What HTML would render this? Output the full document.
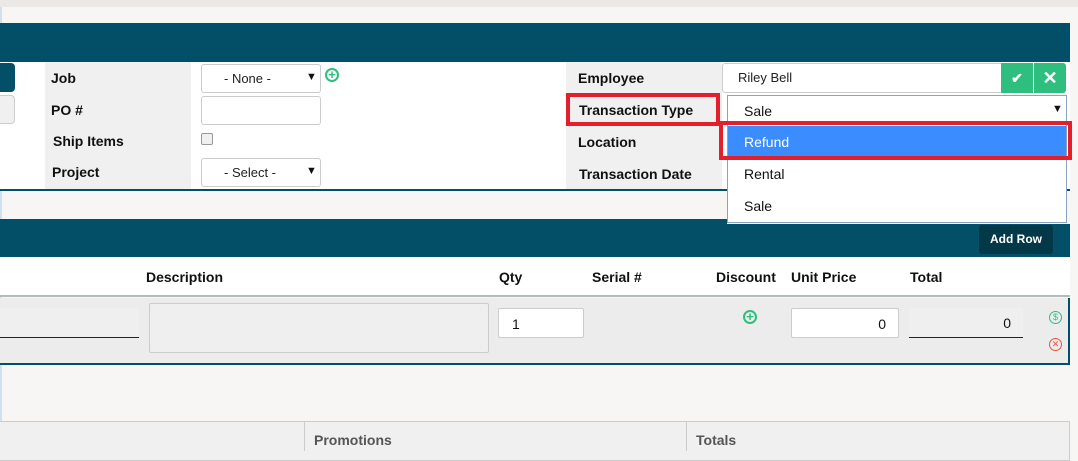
<!DOCTYPE html>
<html><head><style>
*{margin:0;padding:0;box-sizing:border-box}
body{width:1078px;height:450px;background:#f7f6f4;font-family:"Liberation Sans",Arial,sans-serif;position:relative;overflow:hidden;font-size:14px;color:#111}
.a{position:absolute}
.lbl{font-weight:bold;font-size:14px}
.inp{position:absolute;background:#fff;border:1px solid #ccc;border-radius:3px}
.sel{font-size:13px;color:#222}
</style></head><body>
<div class="a" style="left:0;top:0;width:1078px;height:7px;background:#ebe8e6"></div>
<div class="a" style="left:0;top:7px;width:2px;height:443px;background:#cfe0ee"></div>
<div class="a" style="left:0;top:23px;width:1070px;height:39px;background:#034f67"></div>
<div class="a" style="left:0;top:62px;width:1070px;height:129px;background:#fff;border-bottom:2px solid #034f67"></div>
<div class="a" style="left:0;top:63px;width:15px;height:29px;background:#034f67;border-radius:0 4px 4px 0"></div>
<div class="a" style="left:0;top:95px;width:15px;height:29px;background:#f0f0f0;border:1px solid #ccc;border-left:none;border-radius:0 4px 4px 0"></div>
<div class="a" style="left:45px;top:62px;width:146px;height:127px;background:#f0f0f0"></div>
<div class="a" style="left:566px;top:62px;width:156px;height:127px;background:#f0f0f0"></div>
<div class="a lbl" style="left:51px;top:70px">Job</div>
<div class="a lbl" style="left:51px;top:102px">PO #</div>
<div class="a lbl" style="left:53px;top:133px">Ship Items</div>
<div class="a lbl" style="left:52px;top:164px">Project</div>
<div class="inp" style="left:201px;top:64px;width:120px;height:29px"><span class="a sel" style="left:22px;top:6px">- None -</span><span class="a" style="left:104px;top:6px;font-size:11px">▼</span></div>
<div class="a" style="left:325px;top:68px;width:14px;height:14px;border:2px solid #2ebf7f;border-radius:50%;color:#2ebf7f;font-weight:bold;font-size:13px;line-height:9px;text-align:center">+</div>
<div class="inp" style="left:201px;top:96px;width:120px;height:29px"></div>
<div class="a" style="left:201px;top:133px;width:12px;height:12px;border:1px solid #999;border-radius:2px;background:#f0f0f0"></div>
<div class="inp" style="left:201px;top:158px;width:120px;height:29px"><span class="a sel" style="left:22px;top:6px">- Select -</span><span class="a" style="left:104px;top:6px;font-size:11px">▼</span></div>
<div class="a lbl" style="left:578px;top:70px">Employee</div>
<div class="a lbl" style="left:579px;top:102px">Transaction Type</div>
<div class="a lbl" style="left:578px;top:134px">Location</div>
<div class="a lbl" style="left:579px;top:166px">Transaction Date</div>
<div class="inp" style="left:722px;top:63px;width:280px;height:30px;border-radius:3px 0 0 3px"><span class="a sel" style="left:15px;top:6px">Riley Bell</span></div>
<div class="a" style="left:1001px;top:63px;width:32px;height:30px;background:#2ebf7f;color:#fff;text-align:center;line-height:30px;font-weight:bold">✔</div>
<div class="a" style="left:1034px;top:63px;width:32px;height:30px;background:#2ebf7f;color:#fff;text-align:center;line-height:30px;font-weight:bold;font-size:18px;border-radius:0 3px 3px 0">✕</div>
<div class="a" style="left:566px;top:93px;width:154px;height:33px;border:4px solid #e41f2b"></div>
<div class="a" style="left:727px;top:95px;width:340px;height:128px;background:#fff;border:1px solid #8aa3c0"></div>
<div class="a" style="left:744px;top:103px;font-size:14px">Sale</div>
<div class="a" style="left:1052px;top:103px;font-size:11px">▼</div>
<div class="a" style="left:728px;top:126px;width:338px;height:31px;background:#3a8cff"></div>
<div class="a" style="left:719px;top:121px;width:353px;height:39px;border:4px solid #e41f2b"></div>
<div class="a" style="left:744px;top:134px;font-size:14px;color:#fff">Refund</div>
<div class="a" style="left:744px;top:166px;font-size:14px">Rental</div>
<div class="a" style="left:744px;top:198px;font-size:14px">Sale</div>
<div class="a" style="left:0;top:219px;width:727px;height:38px;background:#034f67"></div>
<div class="a" style="left:727px;top:224px;width:343px;height:33px;background:#034f67"></div>
<div class="a" style="left:979px;top:225px;width:74px;height:29px;background:#023847;border-radius:3px;color:#fff;font-weight:bold;font-size:12px;text-align:center;line-height:29px">Add Row</div>
<div class="a" style="left:0;top:257px;width:1070px;height:40px;background:#fff;border-bottom:2px solid #b4bcbe"></div>
<div class="a lbl" style="left:146px;top:269px">Description</div>
<div class="a lbl" style="left:499px;top:269px">Qty</div>
<div class="a lbl" style="left:592px;top:269px">Serial #</div>
<div class="a lbl" style="left:716px;top:269px">Discount</div>
<div class="a lbl" style="left:791px;top:269px">Unit Price</div>
<div class="a lbl" style="left:910px;top:269px">Total</div>
<div class="a" style="left:0;top:298px;width:1070px;height:67px;background:#ececec;border-bottom:2px solid #034f67;border-right:2px solid #034f67"></div>
<div class="a" style="left:0;top:308px;width:139px;height:30px;background:#efefef;border-bottom:1px solid #222"></div>
<div class="a" style="left:149px;top:303px;width:340px;height:50px;background:#efefef;border:1px solid #ccc;border-radius:2px"></div>
<div class="inp" style="left:498px;top:308px;width:86px;height:30px;border-radius:2px"><span class="a" style="left:13px;top:7px">1</span></div>
<div class="a" style="left:743px;top:310px;width:14px;height:14px;border:2px solid #2ebf7f;border-radius:50%;color:#2ebf7f;font-weight:bold;font-size:13px;line-height:9px;text-align:center">+</div>
<div class="inp" style="left:791px;top:308px;width:108px;height:30px;border-radius:2px"><span class="a" style="right:12px;top:7px">0</span></div>
<div class="a" style="left:909px;top:308px;width:114px;height:30px;background:#efefef;border-bottom:1px solid #222"><span class="a" style="right:12px;top:7px">0</span></div>
<div class="a" style="left:1049px;top:311px;width:13px;height:13px;border:1.5px solid #2ebf7f;border-radius:50%;color:#2ebf7f;font-size:9px;line-height:10px;text-align:center">$</div>
<div class="a" style="left:1049px;top:338px;width:13px;height:13px;border:1.5px solid #f0513d;border-radius:50%;color:#f0513d;font-size:9px;line-height:10px;text-align:center">✕</div>
<div class="a" style="left:0;top:421px;width:1070px;height:40px;background:#f0f0f0;border:1px solid #ccc;border-left:none"></div>
<div class="a" style="left:304px;top:421px;width:1px;height:30px;background:#ccc"></div>
<div class="a" style="left:686px;top:421px;width:1px;height:30px;background:#ccc"></div>
<div class="a" style="left:314px;top:432px;font-weight:bold;color:#555">Promotions</div>
<div class="a" style="left:696px;top:432px;font-weight:bold;color:#555">Totals</div>
</body></html>
